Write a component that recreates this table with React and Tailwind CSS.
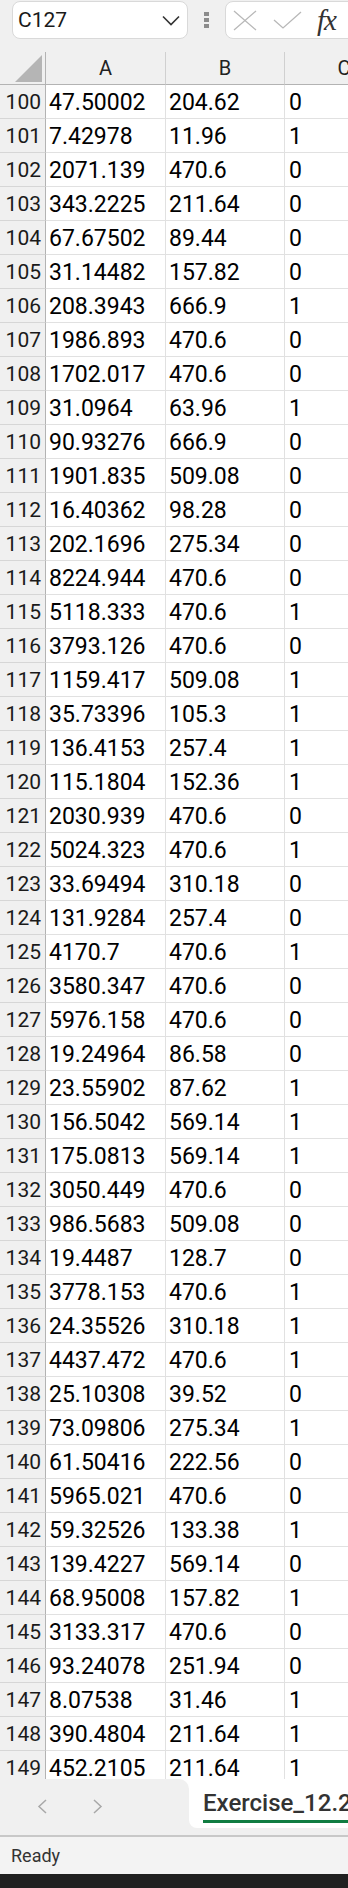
import React from "react";

const rows = [
  [100, "47.50002", "204.62", "0"],
  [101, "7.42978", "11.96", "1"],
  [102, "2071.139", "470.6", "0"],
  [103, "343.2225", "211.64", "0"],
  [104, "67.67502", "89.44", "0"],
  [105, "31.14482", "157.82", "0"],
  [106, "208.3943", "666.9", "1"],
  [107, "1986.893", "470.6", "0"],
  [108, "1702.017", "470.6", "0"],
  [109, "31.0964", "63.96", "1"],
  [110, "90.93276", "666.9", "0"],
  [111, "1901.835", "509.08", "0"],
  [112, "16.40362", "98.28", "0"],
  [113, "202.1696", "275.34", "0"],
  [114, "8224.944", "470.6", "0"],
  [115, "5118.333", "470.6", "1"],
  [116, "3793.126", "470.6", "0"],
  [117, "1159.417", "509.08", "1"],
  [118, "35.73396", "105.3", "1"],
  [119, "136.4153", "257.4", "1"],
  [120, "115.1804", "152.36", "1"],
  [121, "2030.939", "470.6", "0"],
  [122, "5024.323", "470.6", "1"],
  [123, "33.69494", "310.18", "0"],
  [124, "131.9284", "257.4", "0"],
  [125, "4170.7", "470.6", "1"],
  [126, "3580.347", "470.6", "0"],
  [127, "5976.158", "470.6", "0"],
  [128, "19.24964", "86.58", "0"],
  [129, "23.55902", "87.62", "1"],
  [130, "156.5042", "569.14", "1"],
  [131, "175.0813", "569.14", "1"],
  [132, "3050.449", "470.6", "0"],
  [133, "986.5683", "509.08", "0"],
  [134, "19.4487", "128.7", "0"],
  [135, "3778.153", "470.6", "1"],
  [136, "24.35526", "310.18", "1"],
  [137, "4437.472", "470.6", "1"],
  [138, "25.10308", "39.52", "0"],
  [139, "73.09806", "275.34", "1"],
  [140, "61.50416", "222.56", "0"],
  [141, "5965.021", "470.6", "0"],
  [142, "59.32526", "133.38", "1"],
  [143, "139.4227", "569.14", "0"],
  [144, "68.95008", "157.82", "1"],
  [145, "3133.317", "470.6", "0"],
  [146, "93.24078", "251.94", "0"],
  [147, "8.07538", "31.46", "1"],
  [148, "390.4804", "211.64", "1"],
  [149, "452.2105", "211.64", "1"],
];

function Row({ n, a, b, c }) {
  return (
    <div className="flex h-[34px] shrink-0">
      <div className="w-[46px] shrink-0 bg-[#f0f0f0] border-r border-b border-r-[#b3b3b3] border-b-[#d6d6d6] flex items-center justify-end pr-[4px] pt-[2px] text-[21px] leading-none text-[#1a1a1a]">
        {n}
      </div>
      <div className="w-[120px] shrink-0 border-r border-b border-[#e1e1e1] flex items-center pl-[3px] pt-[2px] text-[23px] leading-none text-black">
        {a}
      </div>
      <div className="w-[119px] shrink-0 border-r border-b border-[#e1e1e1] flex items-center pl-[3px] pt-[2px] text-[23px] leading-none text-black">
        {b}
      </div>
      <div className="w-[119px] shrink-0 border-r border-b border-[#e1e1e1] flex items-center pl-[4px] pt-[2px] text-[23px] leading-none text-black">
        {c}
      </div>
    </div>
  );
}

export default function App() {
  return (
    <div className="w-[348px] h-[1888px] flex flex-col overflow-hidden bg-white font-['Roboto',sans-serif]">
      {/* Toolbar */}
      <div className="h-[52px] shrink-0 bg-[#f0f0f0] flex items-start pt-[1px] overflow-hidden">
        <div className="ml-[12px] w-[176px] h-[38px] shrink-0 rounded-[8px] border border-[#d9d9d9] bg-white flex items-center justify-between pl-[5px] pr-[7px]">
          <span className="text-[21px] leading-none text-[#1a1a1a]">C127</span>
          <svg width="18" height="11" viewBox="0 0 18 11">
            <path d="M1 1.5 L9 9.5 L17 1.5" fill="none" stroke="#333" strokeWidth="1.6" />
          </svg>
        </div>
        <div className="ml-[16px] mt-[11px] flex flex-col gap-[2px] shrink-0">
          <div className="w-[5px] h-[4px] bg-[#8c8c8c]" />
          <div className="w-[5px] h-[4px] bg-[#8c8c8c]" />
          <div className="w-[5px] h-[4px] bg-[#8c8c8c]" />
        </div>
        <div className="ml-[16px] w-[200px] h-[38px] shrink-0 rounded-[8px] border border-[#d9d9d9] bg-white flex items-center pl-[7px]">
          <svg width="24" height="21" viewBox="0 0 24 21">
            <path d="M1 1 L23 20 M23 1 L1 20" fill="none" stroke="#b8b8b8" strokeWidth="1.3" />
          </svg>
          <svg className="ml-[16px]" width="29" height="18" viewBox="0 0 29 18">
            <path d="M1 9 L10 17 L28 1" fill="none" stroke="#b8b8b8" strokeWidth="1.3" />
          </svg>
          <span className="ml-[15px] font-['Liberation_Serif',serif] italic text-[29px] leading-none text-[#333] tracking-[-1px]">
            fx
          </span>
        </div>
      </div>

      {/* Column header */}
      <div className="h-[33px] shrink-0 flex bg-[#f0f0f0]">
        <div className="w-[46px] shrink-0 border-r border-b border-[#b3b3b3] flex items-end justify-end pb-[2px] pr-[3px]">
          <svg width="27" height="27" viewBox="0 0 27 27">
            <polygon points="27,0 27,27 0,27" fill="#b5b5b5" />
          </svg>
        </div>
        <div className="w-[120px] shrink-0 border-r border-b border-r-[#d0d0d0] border-b-[#b3b3b3] flex items-center justify-center text-[20px] leading-none text-[#222]">
          A
        </div>
        <div className="w-[119px] shrink-0 border-r border-b border-r-[#d0d0d0] border-b-[#b3b3b3] flex items-center justify-center text-[20px] leading-none text-[#222]">
          B
        </div>
        <div className="w-[119px] shrink-0 border-r border-b border-r-[#d0d0d0] border-b-[#b3b3b3] flex items-center justify-center text-[20px] leading-none text-[#222]">
          C
        </div>
      </div>

      {/* Grid */}
      <div className="h-[1694px] shrink-0 flex flex-col overflow-hidden">
        {rows.map((r) => (
          <Row key={r[0]} n={r[0]} a={r[1]} b={r[2]} c={r[3]} />
        ))}
      </div>

      {/* Sheet tabs */}
      <div className="h-[56px] shrink-0 flex flex-col">
        <div className="h-[49px] flex">
          <div className="w-[189px] shrink-0 bg-white">
            <div className="h-full bg-[#f0f0f0] rounded-tr-[10px] flex items-start pt-[20px]">
              <svg className="ml-[37px]" width="10" height="15" viewBox="0 0 10 15">
                <path d="M9 1 L2 7.5 L9 14" fill="none" stroke="#a8a8a8" strokeWidth="1.5" />
              </svg>
              <svg className="ml-[46px]" width="10" height="15" viewBox="0 0 10 15">
                <path d="M1 1 L8 7.5 L1 14" fill="none" stroke="#a8a8a8" strokeWidth="1.5" />
              </svg>
            </div>
          </div>
          <div className="flex-1 bg-[#f0f0f0] overflow-hidden">
            <div className="h-full bg-white rounded-bl-[8px] pl-[14px] pt-[12px] flex flex-col">
              <span className="text-[24px] leading-none font-medium text-[#333] whitespace-nowrap">
                Exercise_12.27
              </span>
              <div className="mt-[5px] h-[3px] bg-[#107c41]" />
            </div>
          </div>
        </div>
        <div className="h-[7px] bg-[#f0f0f0]" />
      </div>
      <div className="h-[2px] shrink-0 bg-[#c8c8c8]" />

      {/* Status bar */}
      <div className="h-[37px] shrink-0 bg-[#f3f3f3] flex items-center pl-[11px]">
        <span className="text-[18px] leading-none text-[#333]">Ready</span>
      </div>
      <div className="h-[14px] shrink-0 bg-[#202020]" />
    </div>
  );
}
